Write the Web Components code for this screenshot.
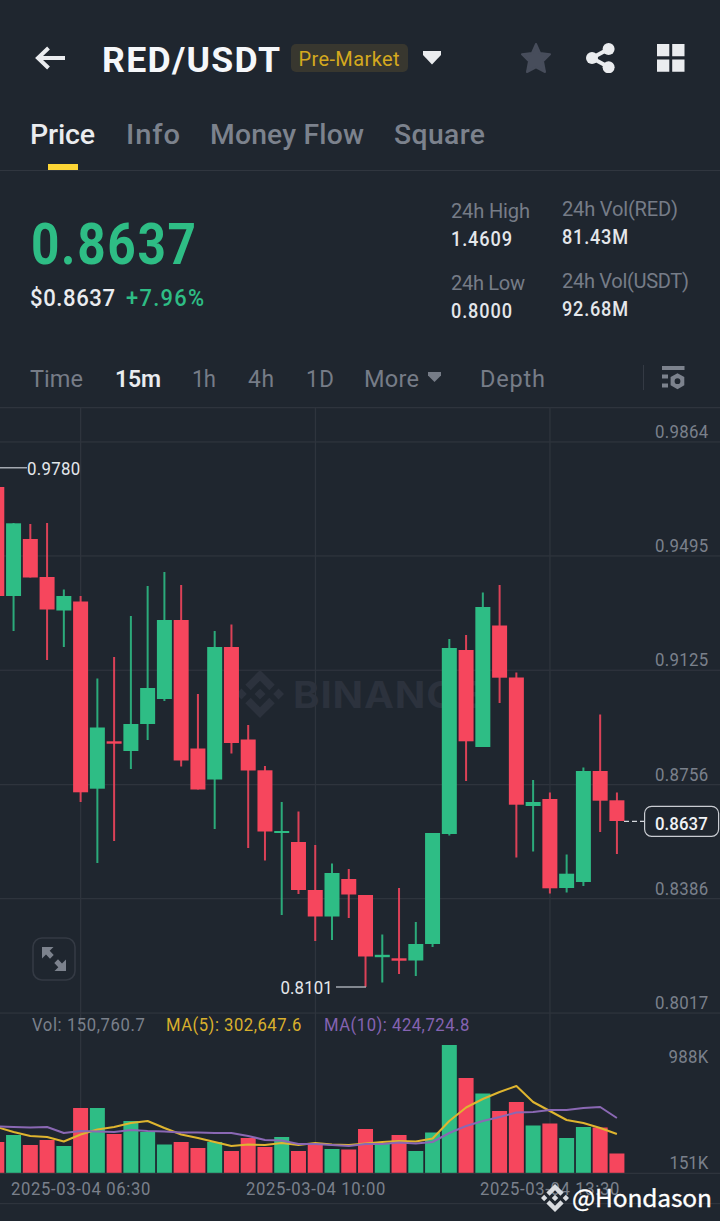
<!DOCTYPE html>
<html lang="en">
<head>
<meta charset="utf-8">
<title>RED/USDT</title>
<style>
html,body{margin:0;padding:0;background:#1f262f}
body{width:720px;height:1221px;overflow:hidden;font-family:Roboto,"Noto Sans",sans-serif;color:#eaecef}
</style>
</head>
<body>
<trade-page></trade-page>
<script>
const GREEN='#2ebd85', RED='#f6465d';
const LOGO='M38.73 53.2L63.32 28.62 87.92 53.22 102.22 38.91 63.32 0 24.42 38.9ZM0 63.31L14.3 49 28.61 63.31 14.3 77.61ZM38.73 73.41L63.32 98 87.92 73.4 102.23 87.69 63.32 126.6 24.41 87.69ZM98 63.31L112.3 49 126.61 63.3 112.3 77.62ZM77.83 63.3L63.32 77.82 48.8 63.3 63.32 48.78Z';

class Base extends HTMLElement{
  connectedCallback(){
    if(this.shadowRoot) return;
    this.attachShadow({mode:'open'}).innerHTML=this.render();
    if(this.ready) this.ready();
  }
}

/* A line of text spaced to an exact width; "sx" condenses the letterforms. */
customElements.define('fit-text',class extends Base{
  render(){return `<style>:host{display:block;white-space:nowrap;flex:none}span{display:inline-block;transform-origin:0 50%}</style><span><slot></slot></span>`}
  ready(){
    const w=+this.getAttribute('w'),sx=+(this.getAttribute('sx')||1),s=this.shadowRoot.querySelector('span');
    const n=this.textContent.length;
    const nat=s.getBoundingClientRect().width;
    s.style.letterSpacing=((w/sx-nat)/(n-1)).toFixed(3)+'px';
    s.style.transform=`scaleX(${sx})`;
    this.style.width=w+'px';
  }
});

customElements.define('pair-header',class extends Base{
  render(){return `<style>
  :host{display:flex;align-items:center;height:116px;box-sizing:border-box;padding-left:35px}
  svg{display:block;flex:none}
  .title{font-size:34.3px;font-weight:700;line-height:40px;margin:3px 0 0 37px;color:#f5f7fa}
  .badge{margin-left:10.5px;width:117px;height:28px;box-sizing:border-box;padding-left:8px;border-radius:5px;background:#38372f;color:#d5a91e;font-size:20px;line-height:31px}
  </style>
  <svg width="30" height="24" viewBox="0 0 30 24" fill="none" stroke="#eaecef" stroke-width="4"><path d="M3 12H30M13.5 2L3 12L13.5 22"/></svg>
  <fit-text class="title" w="178" sx="1.04">RED/USDT</fit-text>
  <div class="badge"><fit-text w="101" sx="1">Pre-Market</fit-text></div>
  <svg style="margin-left:15px" width="18" height="14" fill="#eaecef"><path d="M0 0H18V4L9 13.5 0 4Z"/></svg>
  <svg style="margin-left:80px" width="30" height="30" viewBox="0 0 30 30" fill="#474d5b" stroke="#474d5b" stroke-width="2" stroke-linejoin="round"><path d="M15 1L19 10 29 11.3 22 18.3 24 29 15 24.3 6 29 8 18.3 1 11.3 11 10Z"/></svg>
  <svg style="margin-left:35px" width="29" height="30" viewBox="0 0 29 30" fill="#eaecef"><path d="M22.5 6L6 15 22.5 24" fill="none" stroke="#eaecef" stroke-width="4"/><circle cx="22.6" cy="6" r="6"/><circle cx="6" cy="15" r="6"/><circle cx="22.6" cy="24.3" r="6"/></svg>
  <svg style="margin-left:42.5px" width="28" height="28" fill="#eaecef"><path d="M0 0H12.3V12.2H0ZM15.2 0H27.5V12.2H15.2ZM0 15.5H12.3V27.7H0ZM15.2 15.5H27.5V27.7H15.2Z"/></svg>`}
});

customElements.define('page-tabs',class extends Base{
  render(){return `<style>
  :host{display:flex;height:55px;box-sizing:border-box;border-bottom:1px solid #30363f;padding-left:30px;font-size:28px;line-height:37px;font-weight:500;color:#7c828d}
  .tab{display:flex;flex-direction:column;align-items:center;justify-content:space-between}
  .on{color:#eaecef}
  .bar{width:30px;height:6px;background:#fcd535}
  </style>
  <div class="tab on"><fit-text w="65" sx="1.02">Price</fit-text><div class="bar"></div></div>
  <div class="tab" style="margin-left:31px"><fit-text w="54" sx="1.04">Info</fit-text></div>
  <div class="tab" style="margin-left:30px"><fit-text w="154" sx="1.01">Money Flow</fit-text></div>
  <div class="tab" style="margin-left:30px"><fit-text w="91" sx="1.01">Square</fit-text></div>`}
});

customElements.define('stat-item',class extends Base{
  render(){const a=n=>this.getAttribute(n);return `<style>
  :host{display:block;line-height:28px}
  .l{font-size:20.5px;color:#767c87}
  .v{font-size:19.5px;font-weight:500;color:#e4e7eb;position:relative;top:1px}
  </style>
  <fit-text class="l" w="${a('lw')}" sx=".98">${a('label')}</fit-text>
  <fit-text class="v" w="${a('vw')}" sx=".93">${a('value')}</fit-text>`}
});

customElements.define('price-summary',class extends Base{
  render(){return `<style>
  :host{display:flex;height:178px;box-sizing:border-box;padding-left:31px}
  .left{width:420px;padding-top:44px}
  .big{font-size:57px;line-height:60px;font-weight:700;color:${GREEN}}
  .row{display:flex;gap:11px;margin:8px 0 0 -1px;font-size:23.5px;line-height:31px;font-weight:500}
  .c{display:flex;flex-direction:column}
  .c1{width:111px;padding-top:26px;gap:16px}
  .c2{padding-top:23.5px;gap:16px}
  </style>
  <div class="left">
    <fit-text class="big" w="165" sx=".87">0.8637</fit-text>
    <div class="row"><fit-text w="85" sx=".94">$0.8637</fit-text><fit-text w="78" sx=".93" style="color:${GREEN}">+7.96%</fit-text></div>
  </div>
  <div class="c c1"><stat-item label="24h High" lw="79" value="1.4609" vw="61"></stat-item><stat-item label="24h Low" lw="74" value="0.8000" vw="61"></stat-item></div>
  <div class="c c2"><stat-item label="24h Vol(RED)" lw="116" value="81.43M" vw="66"></stat-item><stat-item label="24h Vol(USDT)" lw="127" value="92.68M" vw="66"></stat-item></div>`}
});

customElements.define('interval-bar',class extends Base{
  render(){return `<style>
  :host{display:flex;align-items:center;height:58px;padding-left:30px;font-size:24px;line-height:30px;color:#767c87}
  fit-text{margin-top:2px}
  .on{font-weight:600;color:#eaecef}
  .sep{width:1px;height:25px;margin:-2px 0 0 98px;background:#343a44}
  svg{display:block;flex:none}
  </style>
  <fit-text w="53" sx=".98">Time</fit-text>
  <fit-text class="on" w="46" sx=".96" style="margin-left:32px">15m</fit-text>
  <fit-text w="24" sx=".92" style="margin-left:31px">1h</fit-text>
  <fit-text w="26" sx=".95" style="margin-left:32px">4h</fit-text>
  <fit-text w="28" sx=".93" style="margin-left:32px">1D</fit-text>
  <fit-text w="55" sx=".98" style="margin-left:30px">More</fit-text>
  <svg style="margin:-3px 0 0 9px" width="14" height="10" fill="#767c87"><path d="M0 0H13V3.5L6.5 10 0 3.5Z"/></svg>
  <fit-text w="65" sx=".98" style="margin-left:38px">Depth</fit-text>
  <div class="sep"></div>
  <svg style="margin-left:17px" width="24" height="26" viewBox="0 0 24 26" fill="#7c828d"><path d="M1 1H23.5V5H1ZM1 9.5H7V13.5H1ZM1 18.5H7V22.5H1Z"/><path fill-rule="evenodd" d="M16.5 8.2L23.3 12V20.2L16.5 24.2 9.6 20.2V12ZM16.5 13.3A2.9 2.9 0 1 0 16.5 19.1 2.9 2.9 0 1 0 16.5 13.3Z"/></svg>`}
});

/* Candle: up flag, high, body top, body bottom, low, volume bar top, MA(5), MA(10). */
const DATA=[
[0,487,487,596,596,1142,1127,1126.5],[1,523,523.3,596,631,1135,1132,1127],[0,524,539,577.5,577.5,1145,1136,1127.5],[0,523,577,609.5,660,1140,1137,1127],
[1,589.5,596,610.5,647,1146,1141.5,1133],[0,596,601.5,792.3,802,1108,1134.5,1131],[1,678.5,727.5,788.7,863,1108,1129.5,1131.5],[0,657,741.3,743.7,841,1134,1127,1132],
[1,616,724,751,769,1121,1123,1130],[1,586,688,724,740,1132,1121,1131],[1,572,620,699,701,1144.5,1128,1131.5],[0,585,620,760.5,766.5,1142,1134.5,1132.5],
[0,694,748.5,789.5,789.5,1148,1138,1132.5],[1,631,647,779.5,829,1142,1142,1133],[0,624.5,647,743,753.5,1151,1146,1133],[0,725,739.5,770.5,848,1138,1144.5,1136],
[0,766,770.3,831.5,860.5,1147,1145,1140],[1,802,831,833,915,1137,1143,1140.5],[0,811.5,842,890,894,1151,1145,1144],[0,845,890,916.5,941,1143,1143,1144],
[1,863.5,873,916.5,940,1149,1144.5,1145],[0,869,879,894.5,918,1149.5,1145,1146],[0,895,895,956.5,987,1129,1143.5,1144],[1,934.5,954.8,957.2,982.5,1144,1142,1144],
[0,888,958.3,960.7,974,1135,1141,1142.5],[1,922,944,960.5,976,1151,1141.5,1143.5],[1,833,833,944,947,1132.5,1138.5,1142],[1,639,648,834,835.5,1045,1121,1133],
[0,635,650,741.3,781,1078,1107.5,1126],[1,592.5,607,747,747,1093.5,1099,1121],[0,585,625.5,677.7,703,1111,1092,1117],[0,672.5,677.5,804.7,857.5,1102,1086,1112.5],
[1,780,802,806,851.5,1125.5,1102,1112],[0,792.5,799,888.3,893.5,1123.5,1111,1110],[1,854.5,873.7,888,892.5,1138,1120,1110],[1,767.5,771,882,886,1127,1123,1108],
[0,714.5,771,800.7,832,1127.5,1128,1107],[0,792.5,800.3,821,854,1153.5,1134,1118]];

customElements.define('candle-chart',class extends Base{
  render(){
    const X=k=>80.6+16.76*(k-5);
    const t=(s,x,y,w,fs,fill,wt=400,sx=.9)=>`<text transform="translate(${x} ${y}) scale(${sx} 1)" textLength="${(w-.7)/sx}" font-size="${fs}" font-weight="${wt}" fill="${fill}">${s}</text>`;
    const G='#7a808b';
    let o='<g fill="#2e343d">';
    for(const y of [407,441.3,555.3,669.6,784,898,1012.4,1172.7]) o+=`<rect x="0" y="${y}" width="720" height="1.3"/>`;
    o+='<rect x="0" y="1203" width="720" height="1.2"/>';
    for(const x of [80,314.8,549.3]) o+=`<rect x="${x}" y="407" width="1.3" height="766"/>`;
    o+='</g>';
    o+=`<g fill="#2c323d"><svg x="236" y="670" width="48" height="48" viewBox="0 0 126.6 126.6"><path d="${LOGO}"/></svg><text transform="translate(293 708) scale(1.1 1)" style="font-family:Inter,sans-serif" font-size="36.5" font-weight="700" textLength="171">BINANCE</text></g>`;
    DATA.forEach((d,k)=>{const x=X(k),c=d[0]?GREEN:RED;
      o+=`<g fill="${c}"><rect x="${(x-1).toFixed(2)}" y="${d[1]}" width="2" height="${d[4]-d[1]}" opacity=".88"/><rect x="${(x-7.5).toFixed(2)}" y="${d[2]}" width="15" height="${d[3]-d[2]}"/><rect x="${(x-7.5).toFixed(2)}" y="${d[5]}" width="15" height="${1172.8-d[5]}"/></g>`;});
    const line=(i,c)=>`<polyline fill="none" stroke="${c}" stroke-width="2" stroke-linejoin="round" points="${DATA.map((d,k)=>X(k).toFixed(1)+','+d[i]).join(' ')}"/>`;
    o+=line(6,'#dfb52f')+line(7,'#8a68b4');
    [['0.9864',438],['0.9495',552.3],['0.9125',666.4],['0.8756',781],['0.8386',895.3],['0.8017',1009.3]].forEach(([s,y])=>o+=t(s,655,y,54,18.7,G));
    o+=t('988K',668.5,1063,40.5,18.7,G)+t('151K',669.5,1169,39.5,18.7,G);
    o+='<path d="M0 467.8H27M336 987H366" stroke="#a4a9b1" stroke-width="1.6"/>';
    o+=t('0.9780',27,474.8,54,18.7,'#e4e7eb')+t('0.8101',280.5,994,53,18.7,'#e4e7eb');
    o+=t('Vol: 150,760.7',32,1031,113.5,18.5,G)+t('MA(5): 302,647.6',166,1031,136,18.5,'#d9b02c')+t('MA(10): 424,724.8',324,1031,146,18.5,'#8563b2');
    o+=t('2025-03-04 06:30',11,1195,140,18.5,G)+t('2025-03-04 10:00',246,1195,140,18.5,G)+t('2025-03-04 13:30',480,1195,140,18.5,G);
    o+='<path d="M624 821.3H644" stroke="#d5d8dd" stroke-width="1.3" stroke-dasharray="5 3"/><rect x="644.6" y="806.3" width="74" height="30" rx="7" fill="#1f262f" stroke="#c9ccd2" stroke-width="1.2"/>';
    o+=t('0.8637',655,830.3,53.5,18.7,'#f0f2f5',500);
    o+='<rect x="33" y="938" width="42" height="42" rx="9" fill="#1f262f" stroke="#343a44" stroke-width="1.6"/><path fill="#7c828d" d="M42 947H53.5L49.7 950.7 53.7 955 50 958.7 46 954.5 42 958.5ZM66 971H54.5L58.3 967.3 54.3 963 58 959.3 62 963.5 66 959.5Z"/>';
    return `<style>:host{display:block;height:814px}svg{display:block}text{font-family:Roboto,sans-serif}</style><svg width="720" height="814" viewBox="0 407 720 814">${o}</svg>`;
  }
});

customElements.define('author-mark',class extends Base{
  render(){return `<style>
  :host{position:absolute;right:8px;bottom:9px;display:flex;align-items:center;gap:3px;font:400 24px/30px "Noto Sans CJK SC","Noto Sans",sans-serif;color:#fff;-webkit-text-stroke:.35px #fff}
  svg{display:block;margin-top:2px}
  </style><svg width="28" height="28" viewBox="0 0 126.6 126.6" fill="#d9dce0"><path d="${LOGO}"/></svg><fit-text w="140" sx="1.02">@Hondason</fit-text>`}
});

customElements.define('trade-page',class extends Base{
  render(){return `<style>:host{display:block;position:relative;width:720px;height:1221px;overflow:hidden;background:#1f262f}</style>
  <pair-header></pair-header><page-tabs></page-tabs><price-summary></price-summary><interval-bar></interval-bar><candle-chart></candle-chart><author-mark></author-mark>`}
});
</script>
</body>
</html>
